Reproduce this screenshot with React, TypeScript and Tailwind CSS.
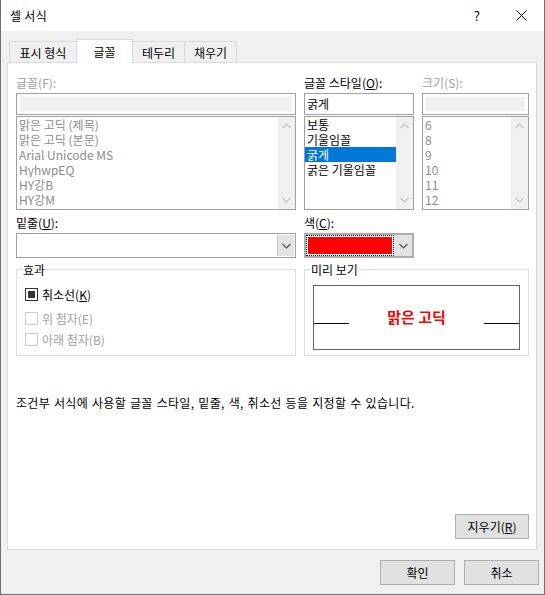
import React from "react";

const Chevron = ({ up = false, color = "#c2c2c2" }: { up?: boolean; color?: string }) => (
  <svg width="9" height="6" viewBox="0 0 9 6" className="block">
    <path
      d={up ? "M0.5 5 L4.5 1 L8.5 5" : "M0.5 1 L4.5 5 L8.5 1"}
      fill="none"
      stroke={color}
      strokeWidth="1.2"
    />
  </svg>
);

const ListBox = ({
  items,
  selected = -1,
  disabled = false,
  width,
}: {
  items: string[];
  selected?: number;
  disabled?: boolean;
  width: string;
}) => (
  <div className={`${width} h-[94px] mt-[1px] border border-[#a0a0a0] bg-white flex`}>
    <div className="flex-1 flex flex-col pt-0 overflow-hidden">
      {items.map((it, i) => (
        <div
          key={i}
          className={
            i === selected
              ? "h-[15px] leading-[15px] pl-[2px] bg-[#0078d7] text-white whitespace-nowrap overflow-hidden"
              : `h-[15px] leading-[15px] pl-[2px] whitespace-nowrap overflow-hidden ${disabled ? "text-[#8c8c8c]" : "text-black"}`
          }
        >
          {it}
        </div>
      ))}
    </div>
    <div className="w-[17px] bg-[#f0f0f0] flex flex-col items-center justify-between pt-[6px] pb-[6px]">
      <Chevron up />
      <Chevron />
    </div>
  </div>
);

const DisabledInput = ({ width }: { width: string }) => (
  <div className={`${width} h-[22px] mt-[3px] border border-[#a0a0a0] bg-white p-[3px]`}>
    <div className="w-full h-full bg-[#f0f0f0]" />
  </div>
);

export default function App() {
  return (
    <div className="w-[545px] h-[595px] bg-[#f0f0f0] border-x border-b border-[#6e6e6e] flex flex-col text-[12px] leading-[15px] text-black font-['Noto_Sans_CJK_KR','Noto_Sans',sans-serif]">
      {/* Title bar */}
      <div className="h-[31px] bg-white flex items-center pl-[9px]">
        <span className="tracking-[0.3px]">셀 서식</span>
        <span className="ml-auto mr-[36px] text-[13px]">?</span>
        <svg width="11" height="11" viewBox="0 0 11 11" className="mr-[17px]">
          <path d="M0.5 0.5 L10.5 10.5 M10.5 0.5 L0.5 10.5" stroke="#000" strokeWidth="1" />
        </svg>
      </div>

      {/* Tabs */}
      <div className="mt-[8px] ml-[8px] h-[23px] flex items-end relative z-10">
        <div className="w-[67px] h-[21px] border-l border-t border-[#d9d9d9] flex items-center justify-center">표시 형식</div>
        <div className="w-[57px] h-[24px] -mb-px bg-white border-l border-t border-r border-[#d9d9d9] flex items-center justify-center pb-[1px]">글꼴</div>
        <div className="w-[52px] h-[21px] border-t border-r border-[#d9d9d9] flex items-center justify-center">테두리</div>
        <div className="w-[52px] h-[21px] border-t border-r border-[#d9d9d9] flex items-center justify-center">채우기</div>
      </div>

      {/* Panel */}
      <div className="ml-[6px] w-[530px] h-[488px] border border-[#d9d9d9] bg-white flex flex-col pt-[12px] pl-[8px] pr-[7px] pb-[10px]">
        {/* Top lists row */}
        <div className="flex items-start">
          <div className="w-[280px] flex flex-col">
            <div className="h-[15px] text-[#a0a0a0]">글꼴(F):</div>
            <DisabledInput width="w-[280px]" />
            <ListBox
              width="w-[280px]"
              disabled
              items={["맑은 고딕 (제목)", "맑은 고딕 (본문)", "Arial Unicode MS", "HyhwpEQ", "HY강B", "HY강M"]}
            />
          </div>
          <div className="w-[110px] ml-[8px] flex flex-col">
            <div className="h-[15px]">
              글꼴 스타일(<span className="underline">O</span>):
            </div>
            <div className="w-[110px] h-[22px] mt-[3px] border border-[#a0a0a0] bg-white pl-[2px] leading-[20px]">굵게</div>
            <ListBox width="w-[110px]" selected={2} items={["보통", "기울임꼴", "굵게", "굵은 기울임꼴"]} />
          </div>
          <div className="w-[107px] ml-[8px] flex flex-col">
            <div className="h-[15px] text-[#a0a0a0]">크기(S):</div>
            <DisabledInput width="w-[107px]" />
            <ListBox width="w-[107px]" disabled items={["6", "8", "9", "10", "11", "12"]} />
          </div>
        </div>

        {/* Underline / color row */}
        <div className="flex items-start mt-[5px]">
          <div className="w-[280px] flex flex-col">
            <div className="h-[15px]">
              밑줄(<span className="underline">U</span>):
            </div>
            <div className="w-[280px] h-[25px] mt-[3px] border border-[#a0a0a0] bg-white flex justify-end p-[1px]">
              <div className="w-[17px] h-full bg-[#e3e3e3] border-l border-[#c8c8c8] flex items-center justify-center">
                <Chevron color="#505050" />
              </div>
            </div>
          </div>
          <div className="w-[110px] ml-[8px] flex flex-col">
            <div className="h-[15px]">
              색(<span className="underline">C</span>):
            </div>
            <div className="w-[110px] h-[25px] mt-[3px] border-2 border-[#adadad] bg-white flex">
              <div className="flex-1 border border-dotted border-black p-[1px]">
                <div className="w-full h-full bg-[#ff0000]" />
              </div>
              <div className="w-[18px] h-full bg-[#e3e3e3] flex items-center justify-center">
                <Chevron color="#505050" />
              </div>
            </div>
          </div>
        </div>

        {/* Effects / preview row */}
        <div className="flex items-start mt-[11px]">
          <div className="w-[280px] h-[87px] border border-[#dcdcdc] relative flex flex-col pl-[8px]">
            <span className="absolute -top-[8px] left-[5px] bg-white px-[1px]">효과</span>
            <div className="h-[15px] mt-[17px] flex items-center">
              <div className="w-[13px] h-[13px] border border-[#333333] p-[2px] bg-white">
                <div className="w-full h-full bg-[#333333]" />
              </div>
              <span className="ml-[4px]">
                취소선(<span className="underline">K</span>)
              </span>
            </div>
            <div className="h-[15px] mt-[9px] flex items-center text-[#a0a0a0]">
              <div className="w-[13px] h-[13px] border border-[#cccccc] bg-white" />
              <span className="ml-[4px]">위 첨자(E)</span>
            </div>
            <div className="h-[15px] mt-[6px] flex items-center text-[#a0a0a0]">
              <div className="w-[13px] h-[13px] border border-[#cccccc] bg-white" />
              <span className="ml-[4px]">아래 첨자(B)</span>
            </div>
          </div>
          <div className="w-[225px] h-[87px] ml-[8px] border border-[#dcdcdc] relative pl-[8px] pt-[15px]">
            <span className="absolute -top-[8px] left-[5px] bg-white px-[1px]">미리 보기</span>
            <div className="w-[207px] h-[65px] border border-[#646464] flex items-start">
              <div className="w-[35px] h-[1px] bg-black mt-[37px]" />
              <div className="flex-1 text-center mt-[21px] leading-[20px] text-[15px] font-bold text-[#ff0000]">맑은 고딕</div>
              <div className="w-[35px] h-[1px] bg-black mt-[37px]" />
            </div>
          </div>
        </div>

        <div className="mt-[39px] h-[15px] tracking-[0.3px] [word-spacing:1px] whitespace-nowrap">
          조건부 서식에 사용할 글꼴 스타일, 밑줄, 색, 취소선 등을 지정할 수 있습니다.
        </div>

        <div className="flex-1" />
        <div className="flex justify-end">
          <button className="w-[74px] h-[25px] bg-[#e1e1e1] border border-[#adadad] flex items-center justify-center">
            지우기(<span className="underline">R</span>)
          </button>
        </div>
      </div>

      {/* Bottom buttons */}
      <div className="flex justify-end gap-[9px] pr-[5px] mt-[10px]">
        <button className="w-[75px] h-[25px] bg-[#e1e1e1] border border-[#adadad] flex items-center justify-center">확인</button>
        <button className="w-[75px] h-[25px] bg-[#e1e1e1] border border-[#adadad] flex items-center justify-center">취소</button>
      </div>
    </div>
  );
}
